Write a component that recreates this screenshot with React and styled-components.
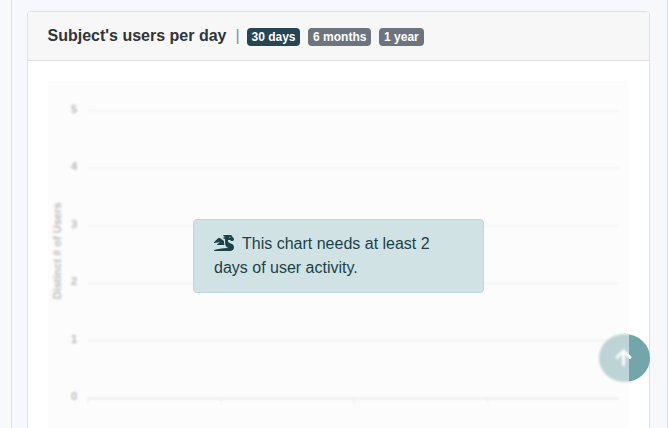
import React from 'react';
import styled, { createGlobalStyle } from 'styled-components';
import { FaArrowUp, FaDragon } from 'react-icons/fa';

const GlobalStyle = createGlobalStyle`
  html, body {
    margin: 0;
    height: 100%;
    overflow: hidden;
  }
  body {
    font-family: "Liberation Sans", Arial, sans-serif;
    background: #f8f9fa;
  }
`;

const Page = styled.div`
  display: flex;
  height: 428px;
  overflow: hidden;
`;

const Sidebar = styled.div`
  width: 11px;
  flex: none;
  background: #f8f9fa;
  border-right: 1px solid #dcdfe6;
`;

const Main = styled.main`
  position: relative;
  flex: 1;
  min-width: 0;
  padding: 11px 17px 0 15px;
  background: #f7f8fe;
  border-right: 1px solid #dcdfe6;
`;

const Card = styled.section`
  background: #fff;
  border: 1px solid #dfdfdf;
  border-radius: 4px;
  height: 500px;
`;

const CardHeader = styled.header`
  display: flex;
  align-items: center;
  height: 48px;
  padding: 0 19.5px;
  background: #f7f7f7;
  border-bottom: 1px solid #dfdfdf;
  border-radius: 3px 3px 0 0;
`;

const Title = styled.h5`
  margin: 0;
  font-size: 16px;
  font-weight: 700;
  line-height: 20px;
  color: #2f3439;
`;

const Divider = styled.span`
  margin: 0 7px 0 9px;
  font-size: 16px;
  color: #868e96;
`;

const Badge = styled.span`
  position: relative;
  top: 1px;
  margin-right: 8px;
  padding: 3px 4.8px;
  border-radius: 4px;
  font-size: 12px;
  font-weight: 700;
  line-height: 12px;
  color: #fff;
  background: ${(p) => (p.$active ? '#264653' : '#6c757d')};
`;

const CardBody = styled.div`
  padding: 20px;
`;

const ChartArea = styled.div`
  position: relative;
  height: 400px;
`;

const ChartSvg = styled.svg`
  display: block;
  width: 100%;
  height: 100%;
`;

const Frost = styled.div`
  position: absolute;
  inset: 0;
  z-index: 3;
  background: rgba(250, 250, 250, 0.55);
  backdrop-filter: blur(1px);
`;

const Alert = styled.div`
  position: absolute;
  z-index: 4;
  top: 138px;
  left: 145px;
  box-sizing: border-box;
  width: 291px;
  padding: 12px 20px;
  border: 1px solid #bfd7da;
  border-radius: 4px;
  background: #d1e2e5;
  color: #1a4248;
  font-size: 16px;
  line-height: 24px;
`;

const DragonIcon = styled(FaDragon)`
  width: 20px;
  height: 16px;
  margin-right: 8px;
  vertical-align: -1.5px;
`;

const ScrollTop = styled.button`
  position: absolute;
  z-index: 2;
  top: 334px;
  right: 17px;
  display: flex;
  align-items: center;
  justify-content: center;
  width: 51px;
  height: 48px;
  padding: 0 2px 2px 0;
  border: 0;
  border-radius: 50%;
  background: #73a6ab;
  color: #fff;
  font-size: 19px;
`;

const ticks = [5, 4, 3, 2, 1, 0];
const rowY = (n) => 396.4 - 81 - n * 57.5;

function Chart() {
  return (
    <ChartSvg viewBox="0 0 581 400">
      {ticks.map((n) => (
        <g key={n}>
          <text x="29" y={rowY(n) + 4} textAnchor="end" fontSize="11" fontWeight="700" fill="#6e6e6e" fontFamily="Liberation Sans">
            {n}
          </text>
          <line x1="40" x2="571" y1={rowY(n) + 2} y2={rowY(n) + 2} stroke="#dcdcdc" strokeWidth={n === 0 ? 2 : 1} />
        </g>
      ))}
      {[40, 173, 306, 439].map((x) => (
        <line key={x} x1={x} x2={x} y1={rowY(0) + 2} y2={rowY(0) + 8} stroke="#dcdcdc" />
      ))}
      <text
        transform="translate(13 170) rotate(-90)"
        textAnchor="middle"
        fontSize="11"
        fontWeight="700"
        fill="#6e6e6e"
        fontFamily="Liberation Sans"
      >
        Distinct # of Users
      </text>
    </ChartSvg>
  );
}

export default function App() {
  return (
    <Page>
      <GlobalStyle />
      <Sidebar />
      <Main>
        <Card>
          <CardHeader>
            <Title>Subject's users per day</Title>
            <Divider>|</Divider>
            <Badge $active>30 days</Badge>
            <Badge>6 months</Badge>
            <Badge>1 year</Badge>
          </CardHeader>
          <CardBody>
            <ChartArea>
              <Chart />
              <Frost />
              <Alert>
                <DragonIcon />
                This chart needs at least 2 days of user activity.
              </Alert>
            </ChartArea>
          </CardBody>
        </Card>
        <ScrollTop aria-label="Back to top">
          <FaArrowUp />
        </ScrollTop>
      </Main>
    </Page>
  );
}
